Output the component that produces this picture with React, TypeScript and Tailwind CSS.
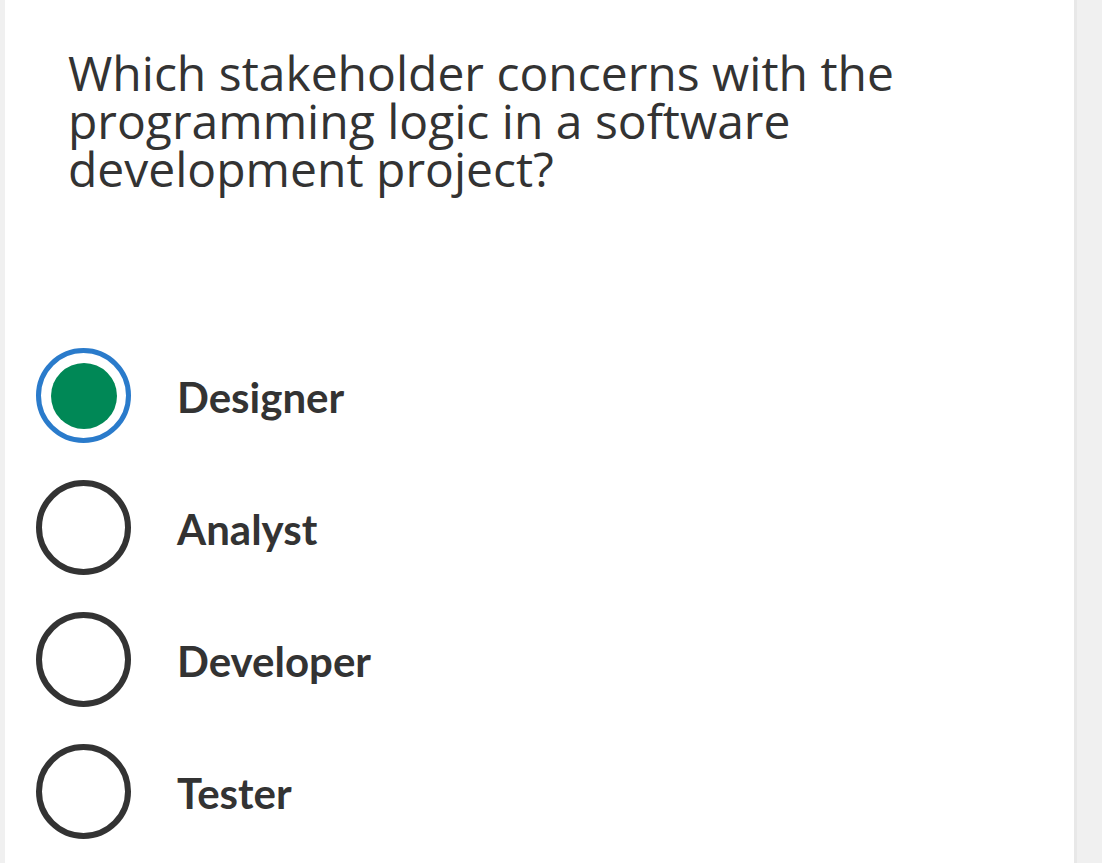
import { useState } from "react";

const options = ["Designer", "Analyst", "Developer", "Tester"];

export default function App() {
  const [selected, setSelected] = useState("Designer");

  return (
    <div className="flex h-[863px] w-full overflow-hidden bg-[#f0f0f0]">
      <div className="w-[5px] shrink-0" />
      {/* Card */}
      <div className="w-[1072px] shrink-0 border-r-[3px] border-[#e8e8e8] bg-white pl-[63px] pt-[49px]">
        <h1 className="w-[900px] text-[48px] leading-[48px] text-[#333333] font-['Open_Sans',sans-serif]">
          Which stakeholder concerns with the programming logic in a software development project?
        </h1>

        <div className="mt-[155px] flex flex-col gap-[37px] -ml-[32px]">
          {options.map((opt) => {
            const isOn = opt === selected;
            return (
              <button
                key={opt}
                onClick={() => setSelected(opt)}
                className="flex h-[95px] items-center gap-[46px] text-left"
              >
                {isOn ? (
                  <span className="flex h-[95px] w-[95px] shrink-0 items-center justify-center rounded-full border-[5px] border-[#2a7bcb]">
                    <span className="h-[66px] w-[66px] rounded-full bg-[#008856]" />
                  </span>
                ) : (
                  <span className="h-[95px] w-[95px] shrink-0 rounded-full border-[6px] border-[#333333]" />
                )}
                <span className="pt-[3px] text-[42px] font-bold text-[#333333] font-['Lato',sans-serif]">
                  {opt}
                </span>
              </button>
            );
          })}
        </div>
      </div>
    </div>
  );
}
